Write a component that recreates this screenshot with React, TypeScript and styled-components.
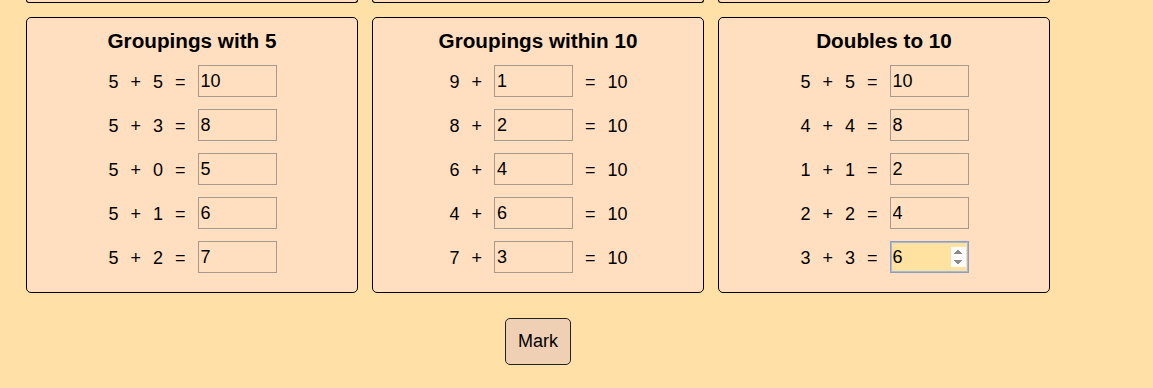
import React from "react";
import styled, { createGlobalStyle } from "styled-components";

const GlobalStyle = createGlobalStyle`
  html, body {
    margin: 0;
    padding: 0;
    background: #ffe0a6;
    font-family: "Comic Sans MS", "Liberation Sans", Arial, sans-serif;
    color: #000;
  }
`;

const Page = styled.div`
  width: 1153px;
  height: 388px;
  overflow: hidden;
  background: #ffe0a6;
`;

const Grid = styled.div`
  display: grid;
  grid-template-columns: repeat(3, 332px);
  column-gap: 14px;
  row-gap: 14px;
  padding-left: 26px;
`;

const CardTail = styled.div`
  height: 3px;
  box-sizing: border-box;
  border: 1px solid #000;
  border-top: none;
  border-radius: 0 0 5px 5px;
  background: #ffdfbf;
`;

const Card = styled.section`
  box-sizing: border-box;
  height: 276px;
  border: 1px solid #000;
  border-radius: 5px;
  background: #ffdfbf;
  padding: 10px 0 19px;
  display: flex;
  flex-direction: column;
  align-items: center;
`;

const Title = styled.h3`
  margin: 0 0 11px;
  font-size: 20.7px;
  line-height: 26px;
  font-weight: bold;
  text-align: center;
`;

const Rows = styled.div`
  display: flex;
  flex-direction: column;
  gap: 12px;
  align-items: center;
`;

const Row = styled.div`
  display: flex;
  align-items: center;
  gap: 12px;
  height: 32px;
  font-size: 18px;
  padding-left: 1px;
`;

const Sym = styled.span`
  line-height: 32px;
  padding-top: 1px;
`;

const Answer = styled.input<{ $active?: boolean }>`
  box-sizing: border-box;
  width: 79px;
  height: 32px;
  margin: 0;
  padding: 1px 2px 0;
  border: 1px solid #a69a8e;
  border-radius: 0;
  background: ${(p) => (p.$active ? "#ffe2a0" : "transparent")};
  font-family: "Comic Sans MS", "Liberation Sans", Arial, sans-serif;
  font-size: 18px;
  color: #000;
  outline: ${(p) => (p.$active ? "1px solid #93a3c6" : "none")};
  outline-offset: -2px;
  &:focus {
    background: #ffe2a0;
    border-color: #8e9dbe;
    outline: 1px solid #aab8d6;
    outline-offset: -2px;
  }
`;

const Footer = styled.div`
  width: 1024px;
  margin-left: 26px;
  padding-top: 25px;
  display: flex;
  justify-content: center;
`;

const MarkButton = styled.button`
  box-sizing: border-box;
  width: 66px;
  height: 47px;
  border: 1px solid #222;
  border-radius: 5px;
  background: #efd0b5;
  font-family: "Comic Sans MS", "Liberation Sans", Arial, sans-serif;
  font-size: 18px;
  color: #000;
  padding: 0;
  cursor: pointer;
`;

type Eq = { a: number; b: number; ans: number };

const withFive: Eq[] = [
  { a: 5, b: 5, ans: 10 },
  { a: 5, b: 3, ans: 8 },
  { a: 5, b: 0, ans: 5 },
  { a: 5, b: 1, ans: 6 },
  { a: 5, b: 2, ans: 7 },
];

const within10: Eq[] = [
  { a: 9, b: 1, ans: 10 },
  { a: 8, b: 2, ans: 10 },
  { a: 6, b: 4, ans: 10 },
  { a: 4, b: 6, ans: 10 },
  { a: 7, b: 3, ans: 10 },
];

const doubles: Eq[] = [
  { a: 5, b: 5, ans: 10 },
  { a: 4, b: 4, ans: 8 },
  { a: 1, b: 1, ans: 2 },
  { a: 2, b: 2, ans: 4 },
  { a: 3, b: 3, ans: 6 },
];

export default function App() {
  return (
    <Page>
      <GlobalStyle />
      <Grid>
        <CardTail />
        <CardTail />
        <CardTail />

        <Card>
          <Title>Groupings with 5</Title>
          <Rows>
            {withFive.map((e, i) => (
              <Row key={i}>
                <Sym>{e.a}</Sym>
                <Sym>+</Sym>
                <Sym>{e.b}</Sym>
                <Sym>=</Sym>
                <Answer type="number" defaultValue={e.ans} />
              </Row>
            ))}
          </Rows>
        </Card>

        <Card>
          <Title>Groupings within 10</Title>
          <Rows>
            {within10.map((e, i) => (
              <Row key={i}>
                <Sym>{e.a}</Sym>
                <Sym>+</Sym>
                <Answer type="number" defaultValue={e.b} />
                <Sym>=</Sym>
                <Sym>{e.ans}</Sym>
              </Row>
            ))}
          </Rows>
        </Card>

        <Card>
          <Title>Doubles to 10</Title>
          <Rows>
            {doubles.map((e, i) => {
              const last = i === doubles.length - 1;
              return (
                <Row key={i}>
                  <Sym>{e.a}</Sym>
                  <Sym>+</Sym>
                  <Sym>{e.b}</Sym>
                  <Sym>=</Sym>
                  <Answer
                    type="number"
                    defaultValue={e.ans}
                    $active={last}
                    autoFocus={last}
                  />
                </Row>
              );
            })}
          </Rows>
        </Card>
      </Grid>
      <Footer>
        <MarkButton type="button">Mark</MarkButton>
      </Footer>
    </Page>
  );
}
